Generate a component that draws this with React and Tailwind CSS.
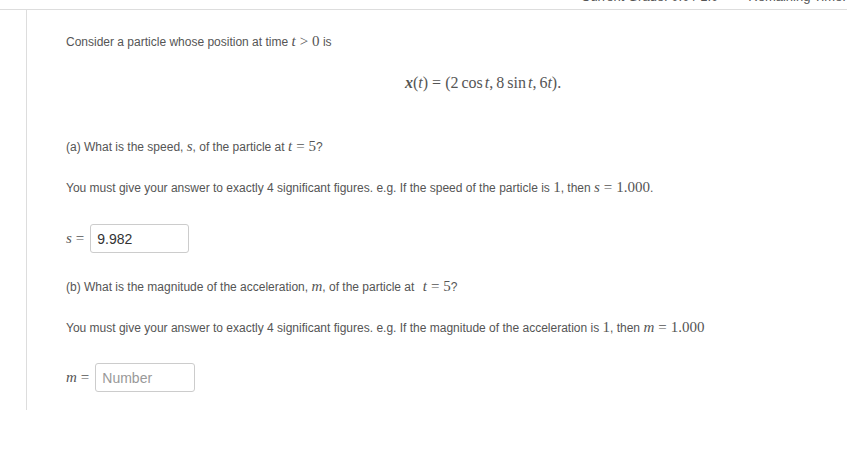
import React from 'react';

const V = ({ children, bold }) => (
  <span className={`italic ${bold ? 'font-bold' : ''}`}>{children}</span>
);

const M = ({ children }) => (
  <span className="text-[15px] leading-none" style={{ fontFamily: '"Liberation Serif", "DejaVu Serif", serif' }}>
    {children}
  </span>
);

const Op = ({ children }) => <span className="mx-[4px]">{children}</span>;

const App = () => {
  return (
    <div className="w-[847px] h-[471px] bg-white text-[#555] overflow-hidden" style={{ fontFamily: '"Liberation Sans", Arial, sans-serif' }}>
      {/* header, clipped by the top of the window */}
      <div className="h-[10px] overflow-hidden relative border-b border-[#ddd]">
        <div className="absolute -top-[10px] left-[581px] flex gap-[30px] whitespace-nowrap text-[13px] leading-[14px] text-[#555]">
          <span>Current Grade: 0.0 / 1.0</span>
          <span>Remaining Time: 15:14</span>
        </div>
      </div>

      <div className="ml-[26px] w-[900px] border-l border-[#ddd] pl-[39px] pt-[22px] pb-[18px] text-[12px] leading-[20px]">
        <p>
          Consider a particle whose position at time <M><V>t</V><Op>&gt;</Op>0</M> is
        </p>

        <div className="mt-[19px] h-[24px] flex items-center pl-[339px]">
          <M>
            <span className="text-[16px]">
              <V bold>x</V>(<V>t</V>)<Op>=</Op>(2<span className="ml-[3px] mr-[2px]">cos</span><V>t</V>,<span className="ml-[3px]">8</span><span className="ml-[3px] mr-[2px]">sin</span><V>t</V>,<span className="ml-[3px]">6</span><V>t</V>).
            </span>
          </M>
        </div>

        <p className="mt-[42px]">
          (a) What is the speed, <M><V>s</V></M>, of the particle at <M><V>t</V><Op>=</Op>5</M>?
        </p>

        <p className="mt-[21px]">
          You must give your answer to exactly 4 significant figures. e.g. If the speed of the particle is <M>1</M>, then <M><V>s</V><Op>=</Op>1.000</M>.
        </p>

        <div className="mt-[26px] flex items-center">
          <M><V>s</V><Op>=</Op></M>
          <div className="ml-[2px] w-[99px] h-[29px] border border-[#ccc] rounded-[3px] flex items-center px-[6px] text-[14px] text-[#333]">
            9.982
          </div>
        </div>

        <p className="mt-[24px]">
          (b) What is the magnitude of the acceleration, <M><V>m</V></M>, of the particle at <span className="ml-[5px]"><M><V>t</V><Op>=</Op>5</M></span>?
        </p>

        <p className="mt-[21px]">
          You must give your answer to exactly 4 significant figures. e.g. If the magnitude of the acceleration is <M>1</M>, then <M><V>m</V><Op>=</Op>1.000</M>
        </p>

        <div className="mt-[25px] flex items-center">
          <M><V>m</V><Op>=</Op></M>
          <input
            placeholder="Number"
            className="ml-[2px] w-[100px] h-[29px] border border-[#ccc] rounded-[3px] px-[6px] text-[14px] text-[#333] placeholder:text-[#999] outline-none"
            style={{ fontFamily: '"Liberation Sans", Arial, sans-serif' }}
          />
        </div>
      </div>
    </div>
  );
};

export default App;
